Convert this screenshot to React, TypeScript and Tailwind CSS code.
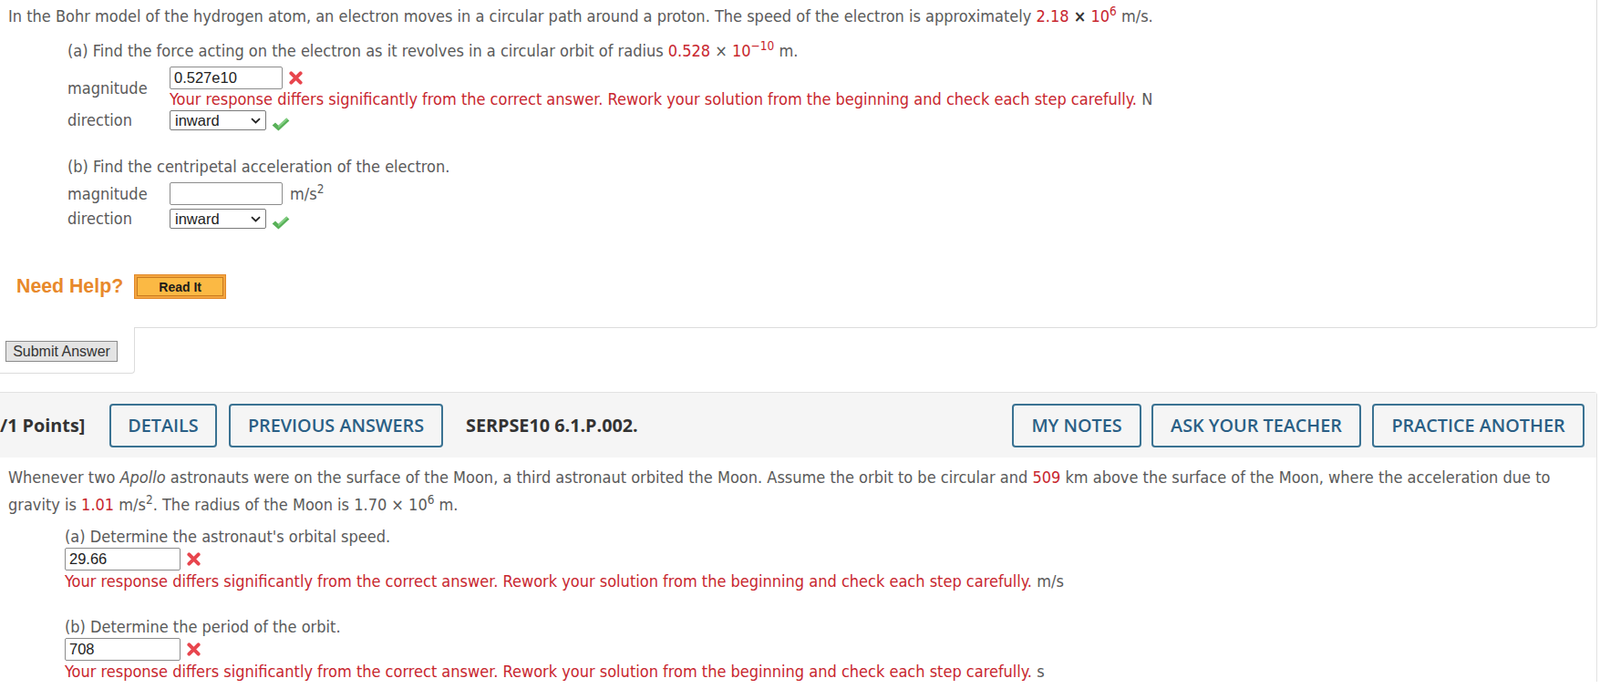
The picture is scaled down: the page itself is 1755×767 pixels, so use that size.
const body = "font-['DejaVu_Sans',Verdana,sans-serif] [font-stretch:condensed] text-[18px] text-[#5a5a5a]";
const arial = "font-['Liberation_Sans',Arial,sans-serif]";
const head = "font-['Open_Sans',sans-serif] [font-stretch:normal] text-[19.8px]";

const XMark = () => (
  <svg width="15" height="15" viewBox="0 0 15 15" className="shrink-0">
    <path d="M2.4 2.4 L12.6 12.6 M12.6 2.4 L2.4 12.6" stroke="#e8464e" strokeWidth="4" strokeLinecap="round" />
  </svg>
);

const Check = () => (
  <svg width="20" height="15" viewBox="0 0 20 15" className="shrink-0 mb-[-1px]">
    <path d="M0.6 8.4 L4 5.4 L7.4 8.8 L16.2 0.6 L19.4 3.6 L7.4 14.6 Z" fill="#58b158" />
    <path d="M7.4 8.8 L16.2 0.6 L17.6 1.9 L7.4 11.4 Z" fill="#86d086" />
  </svg>
);

const Select = ({ value }: { value: string }) => (
  <div className={`w-[106px] h-[22px] border border-[#7a7a7a] rounded-[2px] bg-white flex items-center justify-between pl-[5px] pr-[5px] text-[16.5px] text-[#222] ${arial}`}>
    <span className="leading-none">{value}</span>
    <svg width="11" height="7" viewBox="0 0 11 7">
      <path d="M1 1.2 L5.5 5.4 L10 1.2" stroke="#222" strokeWidth="1.8" fill="none" />
    </svg>
  </div>
);

const Field = ({ value, width = "w-[124px]" }: { value: string; width?: string }) => (
  <input
    readOnly
    value={value}
    className={`${width} h-[25px] border border-[#8c8c8c] rounded-[2px] bg-white px-[4px] text-[16.5px] text-[#222] ${arial}`}
  />
);

const Red = ({ children }: { children: React.ReactNode }) => <span className="text-[#c8262e]">{children}</span>;

const HeadButton = ({ label, width }: { label: string; width: string }) => (
  <div className={`${width} h-[48px] border-2 border-[#3a7292] rounded-[4px] flex items-center justify-center text-[#2a5f85] font-semibold ${head}`}>
    {label}
  </div>
);

export default function App() {
  return (
    <div className={`w-[1755px] h-[767px] overflow-hidden bg-white ${body}`}>
      {/* first question */}
      <div className="w-[1752px] border-r border-b border-[#dcdcdc] rounded-br-[4px] pt-[6px] pb-[31px]">
        <p className="pl-[9px] leading-[24px] whitespace-nowrap">
          In the Bohr model of the hydrogen atom, an electron moves in a circular path around a proton. The speed of the
          electron is approximately <Red>2.18</Red> <span className="font-bold text-[#333]">×</span>{" "}
          <Red>
            10<sup>6</sup>
          </Red>{" "}
          m/s.
        </p>
        <div className="pl-[74px] mt-[14px]">
          <p className="leading-[24px] whitespace-nowrap">
            (a) Find the force acting on the electron as it revolves in a circular orbit of radius <Red>0.528</Red> ×{" "}
            <Red>
              10<sup>−10</sup>
            </Red>{" "}
            m.
          </p>
          <div className="grid grid-cols-[112px_auto] items-center gap-y-[1px] mt-[5px] leading-[22px]">
            <span>magnitude</span>
            <div>
              <div className="flex items-center gap-[7px]">
                <Field value="0.527e10" />
                <XMark />
              </div>
              <p className="whitespace-nowrap text-[#c8262e]">
                Your response differs significantly from the correct answer. Rework your solution from the beginning and
                check each step carefully. <span className="text-[#5a5a5a]">N</span>
              </p>
            </div>
            <span>direction</span>
            <div className="flex items-end gap-[6px]">
              <Select value="inward" />
              <Check />
            </div>
          </div>

          <p className="mt-[28px] leading-[24px]">(b) Find the centripetal acceleration of the electron.</p>
          <div className="grid grid-cols-[112px_auto] items-center gap-y-[4px] mt-[5px] leading-[22px]">
            <span>magnitude</span>
            <div className="flex items-center gap-[8px]">
              <Field value="" />
              <span>
                m/s<sup>2</sup>
              </span>
            </div>
            <span>direction</span>
            <div className="flex items-end gap-[6px]">
              <Select value="inward" />
              <Check />
            </div>
          </div>
        </div>

        <div className="flex items-center gap-[12px] pl-[18px] mt-[50px]">
          <span className={`text-[21.3px] leading-none font-bold text-[#e8892b] ${arial}`}>Need Help?</span>
          <div className="w-[101px] h-[27px] border border-[#e2892a] bg-[#f3a53f] p-[2px]">
            <div className={`h-full border border-[#c97a1f] bg-[#fbb944] flex items-center justify-center text-[14px] leading-none font-bold text-[#1a1a1a] ${arial}`}>
              Read It
            </div>
          </div>
        </div>
      </div>

      <div className="-mt-px w-[148px] h-[51px] bg-white border-r border-b border-[#dcdcdc] rounded-br-[4px] pl-[6px] pt-[15px] flex items-start">
        <button className={`w-[123px] h-[23px] border border-[#8a8a8a] bg-[#e4e4e4] text-[16px] leading-none text-[#333] ${arial}`}>
          Submit Answer
        </button>
      </div>

      {/* second question */}
      <div className="mt-[20px] w-[1752px] border-t border-r border-[#e2e2e2] rounded-tr-[4px]">
        <div className="h-[71px] bg-[#f5f5f5] flex items-center">
          <span className={`w-[120px] font-bold text-[#333] whitespace-nowrap ${head}`}>/1 Points]</span>
          <HeadButton label="DETAILS" width="w-[118px]" />
          <div className="ml-[13px]">
            <HeadButton label="PREVIOUS ANSWERS" width="w-[235px]" />
          </div>
          <span className={`ml-[25px] font-bold text-[#333] whitespace-nowrap ${head}`}>SERPSE10 6.1.P.002.</span>
          <div className="ml-auto mr-[13px] flex items-center">
            <HeadButton label="MY NOTES" width="w-[142px]" />
            <div className="ml-[11px]">
              <HeadButton label="ASK YOUR TEACHER" width="w-[230px]" />
            </div>
            <div className="ml-[12px]">
              <HeadButton label="PRACTICE ANOTHER" width="w-[233px]" />
            </div>
          </div>
        </div>

        <div className="pt-[7px]">
          <p className="pl-[9px] leading-[30px] whitespace-nowrap">
            Whenever two <i>Apollo</i> astronauts were on the surface of the Moon, a third astronaut orbited the Moon.
            Assume the orbit to be circular and <Red>509</Red> km above the surface of the Moon, where the acceleration
            due to
            <br />
            gravity is <Red>1.01</Red> m/s<sup>2</sup>. The radius of the Moon is 1.70 × 10<sup>6</sup> m.
          </p>
          <div className="pl-[71px] mt-[8px]">
            <p className="leading-[24px]">(a) Determine the astronaut's orbital speed.</p>
            <div className="flex items-center gap-[7px]">
              <Field value="29.66" width="w-[127px]" />
              <XMark />
            </div>
            <p className="mt-[1px] leading-[22px] whitespace-nowrap text-[#c8262e]">
              Your response differs significantly from the correct answer. Rework your solution from the beginning and
              check each step carefully. <span className="text-[#5a5a5a]">m/s</span>
            </p>

            <p className="mt-[27px] leading-[24px]">(b) Determine the period of the orbit.</p>
            <div className="flex items-center gap-[7px]">
              <Field value="708" width="w-[127px]" />
              <XMark />
            </div>
            <p className="mt-[1px] leading-[22px] whitespace-nowrap text-[#c8262e]">
              Your response differs significantly from the correct answer. Rework your solution from the beginning and
              check each step carefully. <span className="text-[#5a5a5a]">s</span>
            </p>
          </div>
        </div>
      </div>
    </div>
  );
}
